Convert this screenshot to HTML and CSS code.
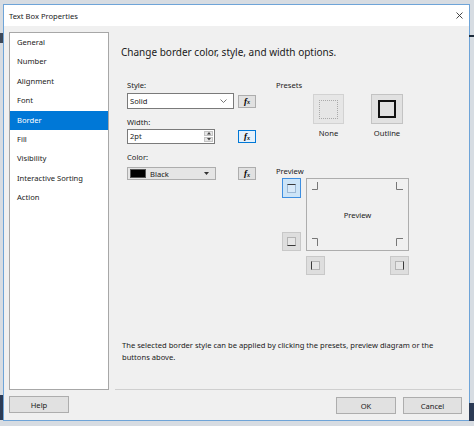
FILE: index.html
```html
<!DOCTYPE html>
<html>
<head>
<meta charset="utf-8">
<link rel="stylesheet" href="styles.css">
</head>
<body>
<div class="bg-mark bg-right"></div>
<div class="bg-mark bg-left"></div>
<div class="bg-mark bg-left-bottom"></div>
<div class="bg-mark bg-right-bottom"></div>
<div class="window">
  <div class="titlebar">
    <span class="title">Text Box Properties</span>
    <svg class="close" width="7" height="7" viewBox="0 0 7 7"><path d="M0.5 0.5 L6.5 6.5 M6.5 0.5 L0.5 6.5" stroke="#333" stroke-width="0.9" fill="none"/></svg>
  </div>
  <div class="main">
    <ul class="nav">
      <li>General</li>
      <li>Number</li>
      <li>Alignment</li>
      <li>Font</li>
      <li class="sel">Border</li>
      <li>Fill</li>
      <li>Visibility</li>
      <li>Interactive Sorting</li>
      <li>Action</li>
    </ul>
    <div class="panel">
      <div class="heading">Change border color, style, and width options.</div>
      <div class="form">
        <div class="fields">
          <div class="label">Style:</div>
          <div class="ctrl-row r1">
            <div class="select style-select"><span>Solid</span>
              <svg width="7" height="4" viewBox="0 0 7 4"><path d="M0.5 0.5 L3.5 3.5 L6.5 0.5" stroke="#666" stroke-width="0.9" fill="none"/></svg>
            </div>
            <button class="fx"><span class="f">f</span><span class="x">x</span></button>
          </div>
          <div class="label l2">Width:</div>
          <div class="ctrl-row r2">
            <div class="spin-input"><span class="val">2pt</span>
              <div class="spinner">
                <div class="spin-half"><svg width="5" height="3" viewBox="0 0 5 3"><path d="M0 3 L2.5 0 L5 3 Z" fill="#444"/></svg></div>
                <div class="spin-half"><svg width="5" height="3" viewBox="0 0 5 3"><path d="M0 0 L2.5 3 L5 0 Z" fill="#444"/></svg></div>
              </div>
            </div>
            <button class="fx focus"><span class="f">f</span><span class="x">x</span></button>
          </div>
          <div class="label l3">Color:</div>
          <div class="ctrl-row r3">
            <div class="color-select"><span class="swatch"></span><span class="cname">Black</span>
              <svg class="tri" width="5" height="3" viewBox="0 0 5 3"><path d="M0 0 L2.5 3 L5 0 Z" fill="#333"/></svg>
            </div>
            <button class="fx"><span class="f">f</span><span class="x">x</span></button>
          </div>
        </div>
        <div class="presets-col">
          <div class="label">Presets</div>
          <div class="presets">
            <div class="preset">
              <div class="pbtn none"><span class="dotted"></span></div>
              <div class="plabel">None</div>
            </div>
            <div class="preset outline-item">
              <div class="pbtn outline"><span class="solid"></span></div>
              <div class="plabel">Outline</div>
            </div>
          </div>
          <div class="label preview-label">Preview</div>
          <div class="preview">
            <div class="side-col">
              <div class="bbtn sel top-btn"><span class="edge e-top"></span></div>
              <div class="bbtn"><span class="edge e-bottom"></span></div>
            </div>
            <div class="pbox">
              <svg class="marks" width="101" height="71" viewBox="0 0 101 71">
                <path d="M5 10.5 H10.5 V3" stroke="#777" stroke-width="1" fill="none"/>
                <path d="M89.5 3 V10.5 H96" stroke="#777" stroke-width="1" fill="none"/>
                <path d="M5 59.5 H10.5 V67" stroke="#777" stroke-width="1" fill="none"/>
                <path d="M96 59.5 H89.5 V67" stroke="#777" stroke-width="1" fill="none"/>
              </svg>
              <span class="ptext">Preview</span>
            </div>
            <div class="bottom-row">
              <div class="bbtn"><span class="edge e-left"></span></div>
              <div class="bbtn"><span class="edge e-right"></span></div>
            </div>
          </div>
        </div>
      </div>
      <p class="desc">The selected border style can be applied by clicking the presets, preview diagram or the buttons above.</p>
    </div>
    <div class="help-cell"><button class="btn help">Help</button></div>
    <div class="footer"><button class="btn ok">OK</button><button class="btn cancel">Cancel</button></div>
  </div>
</div>
</body>
</html>
```

FILE: styles.css
```css
html, body {
  margin: 0;
  padding: 0;
}
body {
  width: 474px;
  height: 426px;
  overflow: hidden;
  position: relative;
  background: #d7dce2;
  font-family: "Noto Sans", "Open Sans", sans-serif;
  font-size: 7.6px;
  color: #1a1a1a;
}
.bg-mark {
  position: absolute;
}
.bg-right {
  left: 469px;
  top: 35px;
  width: 5px;
  height: 2px;
  background: #1e2b3a;
}
.bg-left {
  left: 0;
  top: 33px;
  width: 3px;
  height: 10px;
  background: #3d4858;
}
.bg-left-bottom {
  left: 0;
  top: 395px;
  width: 3px;
  height: 25px;
  background: #2c3b55;
}
.bg-right-bottom {
  left: 469px;
  top: 403px;
  width: 5px;
  height: 18px;
  background: #2c3b55;
}
.window {
  margin: 4px 0 0 3px;
  width: 467px;
  height: 417px;
  box-sizing: border-box;
  border: 1px solid #6ea4d8;
  background: #f0f0f0;
  display: flex;
  flex-direction: column;
}
.titlebar {
  height: 21px;
  flex: none;
  background: #fff;
  display: flex;
  align-items: center;
  justify-content: space-between;
  padding: 0 6px 0 5px;
}
.title {
  padding-top: 1px;
}
.close {
  display: block;
}
.main {
  display: grid;
  grid-template-columns: 100px 347px;
  grid-template-rows: 358px 17px;
  column-gap: 6px;
  row-gap: 6px;
  padding: 6px 6px 6px 5px;
}
.nav {
  margin: 0;
  padding: 0;
  list-style: none;
  background: #fff;
  border: 1px solid #a7a7a7;
  box-sizing: border-box;
}
.nav li {
  height: 19.4px;
  line-height: 19.4px;
  padding-left: 7px;
}
.nav li.sel {
  background: #0078d7;
  color: #fff;
}
.panel {
  display: flex;
  flex-direction: column;
  padding-left: 6px;
  box-sizing: border-box;
  border-bottom: 1px solid #cfcfcf;
}
.heading {
  font-size: 10px;
  line-height: 14px;
  margin-top: 13px;
}
.form {
  display: flex;
  margin-top: 21px;
  margin-left: 6px;
}
.fields {
  width: 129px;
  margin-right: 20px;
  flex: none;
}
.label {
  height: 11px;
  line-height: 11px;
}
.l2, .l3 {
  margin-top: 8px;
}
.ctrl-row {
  display: flex;
  align-items: center;
  justify-content: space-between;
}
.r1 { margin-top: 2px; height: 16px; }
.r2 { margin-top: 1px; height: 15px; }
.r3 { margin-top: 4px; height: 13px; }
.select {
  box-sizing: border-box;
  background: #fff;
  border: 1px solid #7a7a7a;
  display: flex;
  align-items: center;
  justify-content: space-between;
}
.style-select {
  width: 107px;
  height: 16px;
  padding: 0 6px 0 2px;
}
.spin-input {
  width: 88px;
  height: 15px;
  box-sizing: border-box;
  background: #fff;
  border: 1px solid #7a7a7a;
  display: flex;
  align-items: stretch;
  justify-content: space-between;
}
.val {
  padding-left: 2px;
  line-height: 13px;
}
.spinner {
  width: 9px;
  display: flex;
  flex-direction: column;
  margin: 1px;
  gap: 1px;
}
.spin-half {
  flex: 1;
  background: #e6e6e6;
  border: 1px solid #c4c4c4;
  display: flex;
  align-items: center;
  justify-content: center;
  box-sizing: border-box;
}
.spin-half svg {
  display: block;
  width: 4px;
  height: 2.5px;
}
.color-select {
  width: 89px;
  height: 13px;
  box-sizing: border-box;
  background: #e5e5e5;
  border: 1px solid #adadad;
  display: flex;
  align-items: center;
  padding-left: 2px;
  padding-right: 6px;
}
.swatch {
  width: 16px;
  height: 9px;
  background: #000;
  box-sizing: border-box;
  border: 1px solid #555;
  flex: none;
}
.cname {
  margin-left: 4px;
  flex: 1;
}
.tri {
  display: block;
}
.fx {
  width: 18px;
  height: 13px;
  box-sizing: border-box;
  padding: 0;
  margin: 0;
  background: #e1e1e1;
  border: 1px solid #adadad;
  display: flex;
  align-items: center;
  justify-content: center;
  font-family: "Liberation Serif", "Times New Roman", serif;
  font-style: italic;
  font-weight: bold;
  color: #000;
}
.fx.focus {
  border-color: #0078d7;
  background: #e5f1fb;
}
.fx .f {
  font-size: 9px;
  line-height: 9px;
}
.fx .x {
  font-size: 6px;
  line-height: 6px;
  margin-top: 2px;
}
.presets-col {
  flex: 1;
}
.presets {
  display: flex;
  gap: 27px;
  margin-top: 3px;
  padding-left: 37px;
}
.preset {
  width: 31px;
  display: flex;
  flex-direction: column;
  align-items: center;
}
.outline-item {
  width: 32px;
}
.pbtn {
  height: 30px;
  width: 31px;
  box-sizing: border-box;
  display: flex;
  align-items: center;
  justify-content: center;
}
.pbtn.none {
  background: #e6e6e6;
  border: 1px solid #d2d2d2;
}
.pbtn.outline {
  width: 32px;
  background: #e1e1e1;
  border: 1px solid #c3c3c3;
}
.dotted {
  width: 19px;
  height: 19px;
  box-sizing: border-box;
  border: 1px dotted #aaa;
}
.solid {
  width: 18px;
  height: 18px;
  box-sizing: border-box;
  border: 2px solid #111;
}
.plabel {
  margin-top: 3.5px;
  line-height: 11px;
  white-space: nowrap;
}
.preview-label {
  margin-top: 27px;
}
.preview {
  display: grid;
  grid-template-columns: 19px 103px;
  grid-template-rows: 73px 19px;
  column-gap: 5px;
  row-gap: 5px;
  margin-top: 1.5px;
  margin-left: 6px;
}
.side-col {
  display: flex;
  flex-direction: column;
  justify-content: space-between;
}
.bbtn {
  width: 19px;
  height: 19px;
  box-sizing: border-box;
  background: #dedede;
  border: 1px solid #c8c8c8;
  display: flex;
  align-items: center;
  justify-content: center;
}
.bbtn.top-btn {
  height: 20px;
}
.bbtn.sel {
  background: #cce4f7;
  border: 1px solid #3d8ee0;
}
.edge {
  width: 9px;
  height: 9px;
  box-sizing: border-box;
  background: #e6e6e6;
  border: 1px solid #b4b4b4;
}
.bbtn.sel .edge {
  background: #d8e9f8;
  border-color: #9cb8d4;
}
.e-top { border-top: 1px solid #3a3a3a !important; }
.e-bottom { border-bottom: 1px solid #3a3a3a; }
.e-left { border-left: 1px solid #3a3a3a; }
.e-right { border-right: 1px solid #3a3a3a; }
.pbox {
  position: relative;
  box-sizing: border-box;
  border: 1px solid #adadad;
  background: #f0f0f0;
  display: flex;
  align-items: center;
  justify-content: center;
}
.marks {
  position: absolute;
  left: 0;
  top: 0;
}
.ptext {
  position: relative;
}
.bottom-row {
  grid-column: 2;
  display: flex;
  justify-content: space-between;
}
.desc {
  margin: auto 0 26px 1px;
  line-height: 12px;
  max-width: 322px;
}
.help-cell {
  display: flex;
}
.footer {
  display: flex;
  justify-content: flex-end;
  gap: 7px;
  padding-top: 1px;
}
.btn {
  height: 17px;
  box-sizing: border-box;
  margin: 0;
  padding: 0;
  background: #e1e1e1;
  border: 1px solid #adadad;
  font: inherit;
  color: #1a1a1a;
}
.help { width: 60px; }
.ok { width: 60px; }
.cancel { width: 59px; }
```
